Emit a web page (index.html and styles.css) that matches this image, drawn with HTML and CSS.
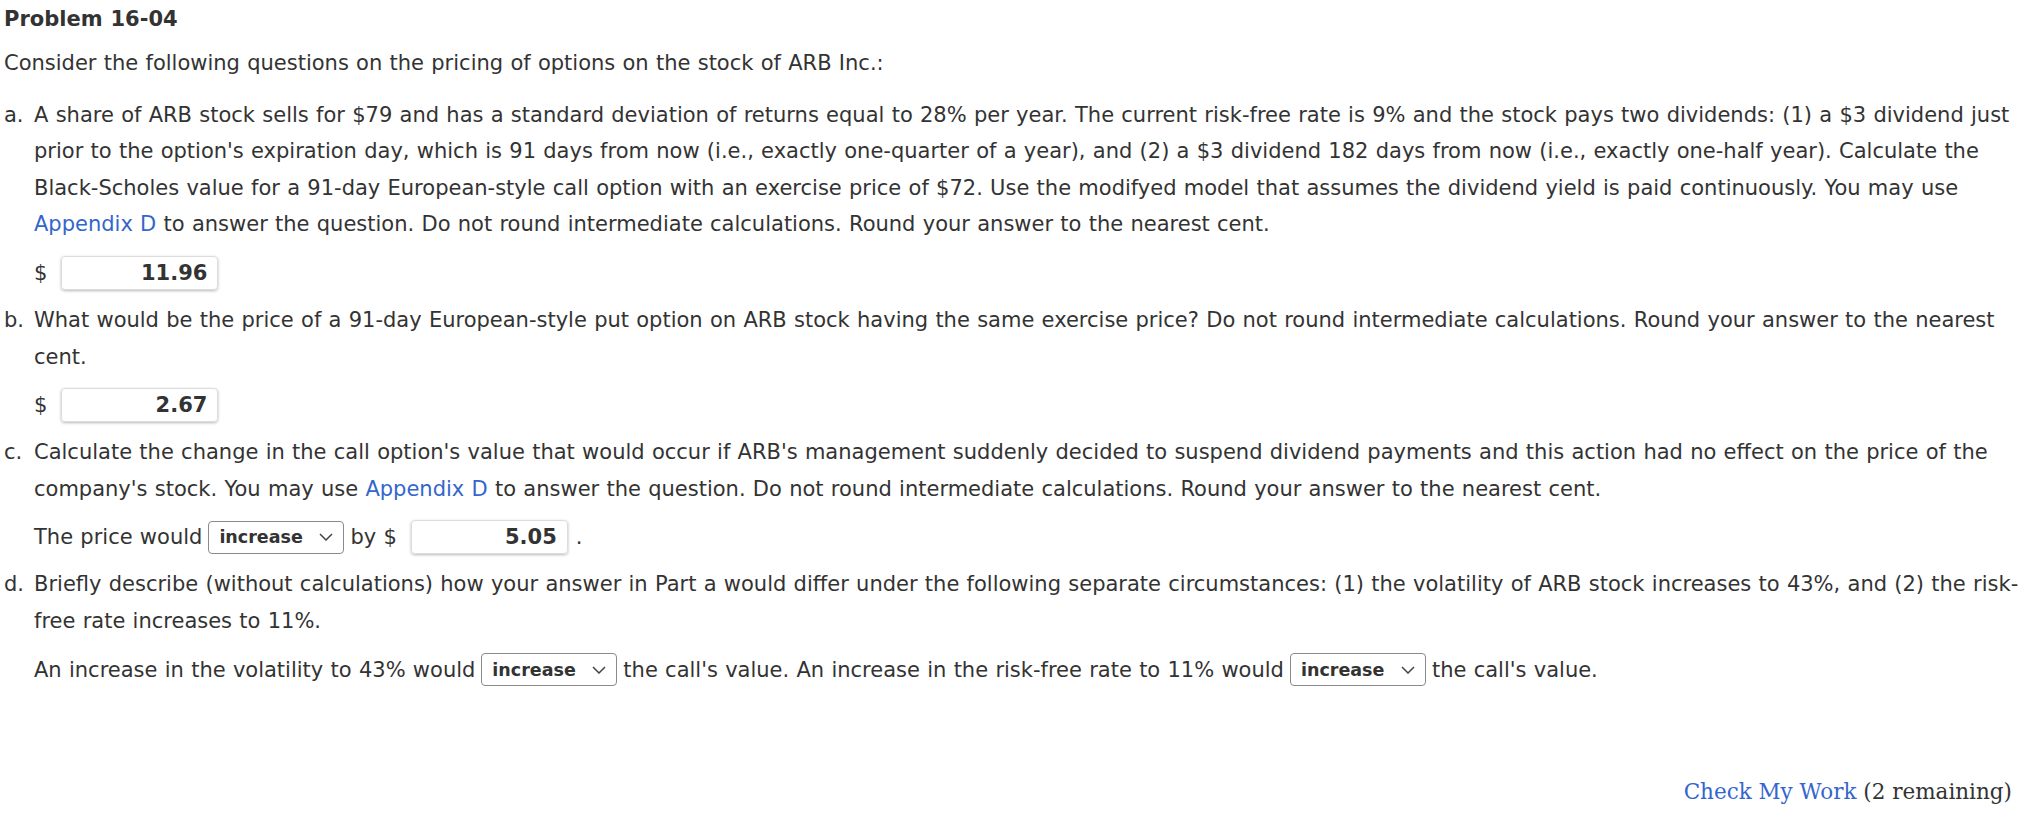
FILE: index.html
```html
<!DOCTYPE html>
<html>
<head>
<meta charset="utf-8">
<link rel="stylesheet" href="styles.css">
</head>
<body>
<div class="page">
  <h1 class="title">Problem 16-04</h1>
  <p class="intro">Consider the following questions on the pricing of options on the stock of ARB Inc.:</p>
  <div class="items">
    <div class="item">
      <span class="label">a.</span>
      <div class="body">
        <p class="text">A share of ARB stock sells for $79 and has a standard deviation of returns equal to 28% per year. The current risk-free rate is 9% and the stock pays two dividends: (1) a $3 dividend just prior to the option's expiration day, which is 91 days from now (i.e., exactly one-quarter of a year), and (2) a $3 dividend 182 days from now (i.e., exactly one-half year). Calculate the Black-Scholes value for a 91-day European-style call option with an exercise price of $72. Use the modifyed model that assumes the dividend yield is paid continuously. You may use <a class="link" href="#">Appendix D</a> to answer the question. Do not round intermediate calculations. Round your answer to the nearest cent.</p>
        <div class="answer"><span class="cur">$</span><span class="field">11.96</span></div>
      </div>
    </div>
    <div class="item">
      <span class="label">b.</span>
      <div class="body">
        <p class="text">What would be the price of a 91-day European-style put option on ARB stock having the same exercise price? Do not round intermediate calculations. Round your answer to the nearest cent.</p>
        <div class="answer"><span class="cur">$</span><span class="field">2.67</span></div>
      </div>
    </div>
    <div class="item">
      <span class="label">c.</span>
      <div class="body">
        <p class="text">Calculate the change in the call option's value that would occur if ARB's management suddenly decided to suspend dividend payments and this action had no effect on the price of the company's stock. You may use <a class="link" href="#">Appendix D</a> to answer the question. Do not round intermediate calculations. Round your answer to the nearest cent.</p>
        <div class="answer"><span>The price would</span><span class="select"><span class="sel-text">increase</span><svg class="chev" viewBox="0 0 14 8" width="14" height="8"><path d="M1 1 L7 7 L13 1" fill="none" stroke="#444" stroke-width="1.5"/></svg></span><span>by $</span><span class="field field-inline">5.05</span><span class="dot">.</span></div>
      </div>
    </div>
    <div class="item">
      <span class="label">d.</span>
      <div class="body">
        <p class="text">Briefly describe (without calculations) how your answer in Part a would differ under the following separate circumstances: (1) the volatility of ARB stock increases to 43%, and (2) the risk-free rate increases to 11%.</p>
        <div class="answer"><span>An increase in the volatility to 43% would</span><span class="select"><span class="sel-text">increase</span><svg class="chev" viewBox="0 0 14 8" width="14" height="8"><path d="M1 1 L7 7 L13 1" fill="none" stroke="#444" stroke-width="1.5"/></svg></span><span>the call's value. An increase in the risk-free rate to 11% would</span><span class="select"><span class="sel-text">increase</span><svg class="chev" viewBox="0 0 14 8" width="14" height="8"><path d="M1 1 L7 7 L13 1" fill="none" stroke="#444" stroke-width="1.5"/></svg></span><span>the call's value.</span></div>
      </div>
    </div>
  </div>
  <div class="footer"><a class="check" href="#">Check My Work</a> (2 remaining)</div>
</div>
</body>
</html>
```
FILE: styles.css
```css
html, body {
  margin: 0;
  padding: 0;
  background: #fff;
}
.page {
  padding: 0 9px 0 4px;
  font-family: "DejaVu Sans", Verdana, sans-serif;
  font-size: 21px;
  word-spacing: 0.6px;
  color: #333;
}
.title {
  margin: 0;
  font-size: 21px;
  font-weight: bold;
  line-height: 38px;
}
.intro {
  margin: 7px 0 0 0;
  line-height: 36.6px;
}
.items {
  margin-top: 15px;
  display: flex;
  flex-direction: column;
  gap: 12px;
}
.item {
  display: flex;
}
.label {
  width: 30px;
  flex: none;
  line-height: 36.6px;
}
.body {
  flex: 1;
}
.text {
  margin: 0;
  line-height: 36.6px;
}
.link {
  color: #3366cc;
  text-decoration: none;
}
.answer {
  margin-top: 13px;
  height: 34px;
  display: flex;
  align-items: center;
  gap: 6px;
}
.cur {
  margin-right: 8px;
}
.field {
  width: 157px;
  height: 34px;
  box-sizing: border-box;
  border: 1px solid #dcdcdc;
  border-radius: 4px;
  box-shadow: 0 1px 3px rgba(0,0,0,0.28);
  display: flex;
  align-items: center;
  justify-content: flex-end;
  padding-right: 10px;
  font-weight: bold;
  font-size: 21px;
  word-spacing: 0;
}
.field-inline {
  margin-left: 8px;
}
.dot {
  margin-left: 2px;
}
.select {
  width: 136px;
  height: 33px;
  box-sizing: border-box;
  border: 1px solid #8a8a8a;
  border-radius: 4px;
  display: flex;
  align-items: center;
  justify-content: space-between;
  padding: 0 10px 0 10px;
}
.sel-text {
  font-weight: bold;
  font-size: 17.5px;
  word-spacing: 0;
}
.chev {
  display: block;
}
.footer {
  margin-top: 92px;
  padding-right: 17px;
  text-align: right;
  font-family: "DejaVu Serif", Georgia, "Liberation Serif", serif;
  font-size: 21.5px;
  word-spacing: 0;
  color: #333;
}
.check {
  color: #3366cc;
  text-decoration: none;
}
```
